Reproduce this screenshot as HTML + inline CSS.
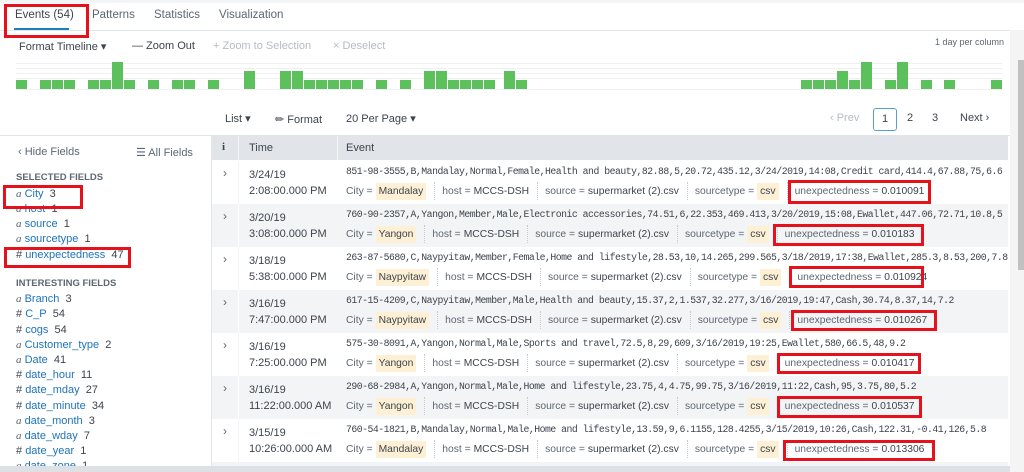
<!DOCTYPE html>
<html><head><meta charset="utf-8"><style>
*{margin:0;padding:0;box-sizing:border-box}
body{width:1024px;height:472px;overflow:hidden;background:#fff;font-family:"Liberation Sans",sans-serif;color:#3c444d;position:relative;font-size:11px}
.a{position:absolute;white-space:nowrap}
.bar{position:absolute;background:#5cc05c;width:11px}
.red{position:absolute;border:3px solid #e5121b}
.fl{position:absolute;left:16px;font-size:11px;color:#3c444d}
.fl b{font-weight:normal;color:#1e73b9}
.fl i{font-family:"Liberation Serif",serif;font-style:italic;color:#5c6773}
.row{position:absolute;left:212px;width:796px;height:43px;overflow:hidden}
.row .ch{position:absolute;left:11px;top:5px;font-size:12px;color:#5c6773}
.row .t{position:absolute;left:37px;top:6px;font-size:11px;line-height:16px;color:#3c444d}
.row .e{position:absolute;left:134px;top:5px;font-family:"Liberation Mono",monospace;font-size:9.8px;letter-spacing:-0.5px;color:#3c444d;white-space:nowrap}
.row .f{position:absolute;left:134px;top:21px;font-size:10.3px;display:flex;align-items:center;white-space:nowrap;color:#5c6773}
.f .v{background:#fdf0d4;padding:3px 3px;margin-left:3px;color:#3c444d}
.f .s{border-left:1px dotted #c3cbd4;height:18px;margin:0 7px 0 8px}
.f .k{color:#3c444d;margin-left:3px}
</style></head><body>
<div class="a" style="left:0;top:0;width:1024px;height:3px;background:#f2f4f5"></div>
<div class="a" style="left:15px;top:9px;font-size:11.5px;color:#3c444d">Events (54)</div>
<div class="a" style="left:14px;top:28px;width:55px;height:2px;background:#1a7fc1"></div>
<div class="a" style="left:92px;top:9px;font-size:11.5px;color:#5c6773">Patterns</div>
<div class="a" style="left:154px;top:9px;font-size:11.5px;color:#5c6773">Statistics</div>
<div class="a" style="left:219px;top:9px;font-size:11.5px;color:#5c6773">Visualization</div>
<div class="a" style="left:0;top:30px;width:1010px;height:1px;background:#e1e6eb"></div>
<div class="red" style="left:4px;top:4px;width:85px;height:34px"></div>
<div class="a" style="left:19px;top:40px;font-size:11px">Format Timeline ▾</div>
<div class="a" style="left:132px;top:40px;font-size:11px">— Zoom Out</div>
<div class="a" style="left:213px;top:40px;font-size:11px;color:#b5bcc4">+ Zoom to Selection</div>
<div class="a" style="left:333px;top:40px;font-size:11px;color:#b5bcc4">× Deselect</div>
<div class="a" style="left:935px;top:37px;font-size:9px;color:#5c6773">1 day per column</div>
<div class="a" style="left:16px;top:63px;width:986px;height:1px;background:#eef0f2"></div>
<div class="a" style="left:16px;top:68px;width:986px;height:1px;background:#eef0f2"></div>
<div class="a" style="left:16px;top:73px;width:986px;height:1px;background:#eef0f2"></div>
<div class="a" style="left:16px;top:78px;width:986px;height:1px;background:#eef0f2"></div>
<div class="a" style="left:16px;top:89px;width:986px;height:1px;background:#eef0f2"></div>
<div id="tl"></div>
<div class="a" style="left:225px;top:112px;font-size:11px">List ▾</div>
<div class="a" style="left:275px;top:113px;font-size:11px">&#9999;&#xFE0E; Format</div>
<div class="a" style="left:346px;top:112px;font-size:11px">20 Per Page ▾</div>
<div class="a" style="left:830px;top:112px;font-size:11px;color:#b5bcc4">‹ Prev</div>
<div class="a" style="left:873px;top:108px;width:24px;height:23px;border:1px solid #5a9fd4;border-radius:3px;text-align:center;line-height:21px;font-size:11px">1</div>
<div class="a" style="left:907px;top:112px;font-size:11px">2</div>
<div class="a" style="left:932px;top:112px;font-size:11px">3</div>
<div class="a" style="left:960px;top:112px;font-size:11px">Next ›</div>
<div class="a" style="left:0;top:135px;width:1010px;height:1px;background:#e1e6eb"></div>
<div class="a" style="left:211px;top:136px;width:1px;height:336px;background:#e1e6eb"></div>
<div class="a" style="left:18px;top:146px;font-size:11px;color:#5c6773">‹ Hide Fields</div>
<div class="a" style="left:136px;top:146px;font-size:11px;color:#5c6773">☰ All Fields</div>
<div class="fl" style="top:172px;font-size:9.5px;font-weight:bold;color:#5c6773">SELECTED FIELDS</div>
<div class="fl" style="top:188px"><i>a</i> <b>City</b>&nbsp; 3</div>
<div class="fl" style="top:203px"><i>a</i> <b>host</b>&nbsp; 1</div>
<div class="fl" style="top:218px"><i>a</i> <b>source</b>&nbsp; 1</div>
<div class="fl" style="top:233px"><i>a</i> <b>sourcetype</b>&nbsp; 1</div>
<div class="fl" style="top:249px"># <b>unexpectedness</b>&nbsp; 47</div>
<div class="fl" style="top:278px;font-size:9.5px;font-weight:bold;color:#5c6773">INTERESTING FIELDS</div>
<div class="fl" style="top:293px"><i>a</i> <b>Branch</b>&nbsp; 3</div>
<div class="fl" style="top:308px"># <b>C_P</b>&nbsp; 54</div>
<div class="fl" style="top:324px"># <b>cogs</b>&nbsp; 54</div>
<div class="fl" style="top:339px"><i>a</i> <b>Customer_type</b>&nbsp; 2</div>
<div class="fl" style="top:354px"><i>a</i> <b>Date</b>&nbsp; 41</div>
<div class="fl" style="top:369px"># <b>date_hour</b>&nbsp; 11</div>
<div class="fl" style="top:384px"># <b>date_mday</b>&nbsp; 27</div>
<div class="fl" style="top:400px"># <b>date_minute</b>&nbsp; 34</div>
<div class="fl" style="top:415px"><i>a</i> <b>date_month</b>&nbsp; 3</div>
<div class="fl" style="top:430px"><i>a</i> <b>date_wday</b>&nbsp; 7</div>
<div class="fl" style="top:445px"># <b>date_year</b>&nbsp; 1</div>
<div class="fl" style="top:460px"><i>a</i> <b>date_zone</b>&nbsp; 1</div>
<div class="red" style="left:3px;top:185px;width:80px;height:24px"></div>
<div class="red" style="left:4px;top:247px;width:127px;height:21px"></div>
<div class="a" style="left:212px;top:136px;width:796px;height:24px;background:#e1e4e8"></div>
<div class="a" style="left:238px;top:136px;width:1px;height:24px;background:#f2f4f5"></div>
<div class="a" style="left:337px;top:136px;width:1px;height:24px;background:#f2f4f5"></div>
<div class="a" style="left:222px;top:141px;font-size:11px;font-weight:bold;font-family:'Liberation Serif',serif">i</div>
<div class="a" style="left:249px;top:142px;font-size:11px">Time</div>
<div class="a" style="left:346px;top:142px;font-size:11px">Event</div>
<div id="rows"></div>
<div class="a" style="left:212px;top:462px;width:796px;height:10px;background:#f2f4f5"></div>
<div class="a" style="left:0;top:466px;width:1010px;height:6px;background:#dde1e5"></div>
<div class="a" style="left:1010px;top:30px;width:14px;height:442px;background:#f4f4f4"></div>
<div class="a" style="left:1018px;top:60px;width:6px;height:210px;background:#c1c1c1"></div>
<script>
var bars=[[16,9],[40,9],[52,9],[64,9],[88,9],[100,9],[112,27],[124,9],[148,9],[172,9],[184,9],[208,9],[244,18],[280,18],[292,18],[304,9],[316,9],[328,9],[340,9],[352,9],[376,9],[400,9],[424,18],[436,18],[448,9],[460,9],[472,9],[484,9],[504,18],[516,9],[801,9],[813,9],[825,9],[837,18],[849,9],[861,27],[885,9],[897,27],[921,9],[944,9],[991,9]];
var h='';bars.forEach(function(b){h+='<div class="bar" style="left:'+b[0]+'px;top:'+(89-b[1])+'px;height:'+b[1]+'px"></div>'});
document.getElementById('tl').innerHTML=h;
var R=[
["3/24/19","2:08:00.000 PM","851-98-3555,B,Mandalay,Normal,Female,Health and beauty,82.88,5,20.72,435.12,3/24/2019,14:08,Credit card,414.4,67.88,75,6.6","Mandalay","0.010091"],
["3/20/19","3:08:00.000 PM","760-90-2357,A,Yangon,Member,Male,Electronic accessories,74.51,6,22.353,469.413,3/20/2019,15:08,Ewallet,447.06,72.71,10.8,5","Yangon","0.010183"],
["3/18/19","5:38:00.000 PM","263-87-5680,C,Naypyitaw,Member,Female,Home and lifestyle,28.53,10,14.265,299.565,3/18/2019,17:38,Ewallet,285.3,8.53,200,7.8","Naypyitaw","0.010924"],
["3/16/19","7:47:00.000 PM","617-15-4209,C,Naypyitaw,Member,Male,Health and beauty,15.37,2,1.537,32.277,3/16/2019,19:47,Cash,30.74,8.37,14,7.2","Naypyitaw","0.010267"],
["3/16/19","7:25:00.000 PM","575-30-8091,A,Yangon,Normal,Male,Sports and travel,72.5,8,29,609,3/16/2019,19:25,Ewallet,580,66.5,48,9.2","Yangon","0.010417"],
["3/16/19","11:22:00.000 AM","290-68-2984,A,Yangon,Normal,Male,Home and lifestyle,23.75,4,4.75,99.75,3/16/2019,11:22,Cash,95,3.75,80,5.2","Yangon","0.010537"],
["3/15/19","10:26:00.000 AM","760-54-1821,B,Mandalay,Normal,Male,Home and lifestyle,13.59,9,6.1155,128.4255,3/15/2019,10:26,Cash,122.31,-0.41,126,5.8","Mandalay","0.013306"]];
var s='';R.forEach(function(r,i){var y=161+i*43;
s+='<div class="row" style="top:'+y+'px;background:'+(i%2?'#f2f4f5':'#fff')+'"><div class="ch">&#x203A;</div><div class="a" style="left:26px;top:0;width:1px;height:43px;background:'+(i%2?'#fff':'#f2f4f5')+'"></div><div class="t">'+r[0]+'<br>'+r[1]+'</div><div class="e">'+r[2]+'</div><div class="f"><span>City =</span><span class="v">'+r[3]+'</span><span class="s"></span><span>host =</span><span class="k">MCCS-DSH</span><span class="s"></span><span>source =</span><span class="k">supermarket (2).csv</span><span class="s"></span><span>sourcetype =</span><span class="v">csv</span><span class="s"></span><span>unexpectedness =</span><span class="k">'+r[4]+'</span></div></div>'});
document.getElementById('rows').innerHTML=s;
</script>
<div class="red" style="left:788px;top:180px;width:143px;height:24px"></div>
<div class="red" style="left:773px;top:224px;width:151px;height:22px"></div>
<div class="red" style="left:789px;top:266px;width:135px;height:22px"></div>
<div class="red" style="left:791px;top:310px;width:146px;height:21px"></div>
<div class="red" style="left:777px;top:353px;width:144px;height:21px"></div>
<div class="red" style="left:777px;top:396px;width:145px;height:22px"></div>
<div class="red" style="left:783px;top:440px;width:152px;height:21px"></div>
</body></html>
